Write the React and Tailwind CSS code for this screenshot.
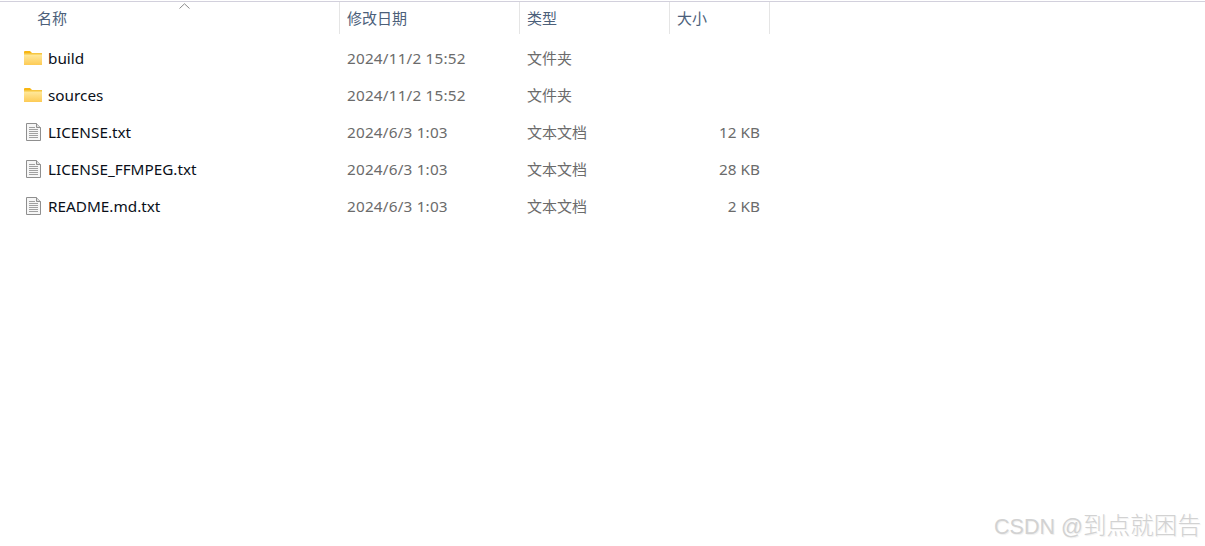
const FONT = { fontFamily: '"Noto Sans", "Noto Sans CJK SC", sans-serif' };

const rows = [
  { name: "build", icon: "folder", date: "2024/11/2 15:52", type: "文件夹", size: "" },
  { name: "sources", icon: "folder", date: "2024/11/2 15:52", type: "文件夹", size: "" },
  { name: "LICENSE.txt", icon: "file", date: "2024/6/3 1:03", type: "文本文档", size: "12 KB" },
  { name: "LICENSE_FFMPEG.txt", icon: "file", date: "2024/6/3 1:03", type: "文本文档", size: "28 KB" },
  { name: "README.md.txt", icon: "file", date: "2024/6/3 1:03", type: "文本文档", size: "2 KB" },
];

function FolderIcon() {
  return (
    <svg width="18" height="14" viewBox="0 0 18 14" className="shrink-0">
      <defs>
        <linearGradient id="fg" x1="0" y1="0" x2="0" y2="1">
          <stop offset="0" stopColor="#ffeaa0" />
          <stop offset="1" stopColor="#fdcb55" />
        </linearGradient>
      </defs>
      <path d="M0 1 Q0 0 1 0 H6 L8 2 V5 H0 Z" fill="#f8b612" />
      <rect x="0" y="2" width="18" height="12" fill="#f3c453" />
      <rect x="0" y="3" width="18" height="11" fill="url(#fg)" />
      <rect x="0" y="2.5" width="18" height="1" fill="#f8c535" />
    </svg>
  );
}

function FileIcon() {
  return (
    <svg width="15" height="18" viewBox="0 0 15 18" className="shrink-0">
      <path d="M.5.5 H10.5 L14.5 4.5 V17.5 H.5 Z" fill="#f6f6f6" stroke="#8f8f8f" />
      <path d="M10.5.5 V4.5 H14.5" fill="#dedede" stroke="#8f8f8f" />
      <path d="M3 4.5 H9 M3 6.5 H12 M3 8.5 H12 M3 10.5 H12 M3 12.5 H12 M3 14.5 H12" stroke="#a0a0a0" strokeWidth="1" />
    </svg>
  );
}

function Head({ width, label, sort }) {
  return (
    <div className={`relative flex h-[32px] items-center border-r border-[#e5e5e5] text-[15px] text-[#4c607a] ${width}`}>
      {sort && (
        <svg width="11" height="6" viewBox="0 0 11 6" className="absolute left-[179px] top-[1px]">
          <path d="M.5 5.5 L5.5 .8 L10.5 5.5" fill="none" stroke="#8a8a8a" strokeWidth="1" />
        </svg>
      )}
      <span className="-translate-y-[0.5px]">{label}</span>
    </div>
  );
}

export default function App() {
  return (
    <div className="relative h-[546px] w-[1205px] overflow-hidden bg-white" style={FONT}>
      <div className="pt-[1px]">
        <div className="h-[1px] bg-[#d2d0dc]" />
      </div>
      <div className="flex">
        <Head width="w-[340px] pl-[37px]" label="名称" sort />
        <Head width="w-[180px] pl-[7px]" label="修改日期" />
        <Head width="w-[150px] pl-[7px]" label="类型" />
        <Head width="w-[100px] pl-[7px]" label="大小" />
      </div>
      <div className="pt-[6px]">
        {rows.map((r) => (
          <div key={r.name} className="flex h-[37px] items-center text-[15.3px] text-[#6b6b6b]">
            <div className="flex w-[340px] items-center">
              <div className="flex w-[48px] justify-start pl-[24px]">
                <span className="flex w-[18px] -translate-y-[1px] justify-center">
                  {r.icon === "folder" ? <FolderIcon /> : <FileIcon />}
                </span>
              </div>
              <span className="text-[#0a0f18]">{r.name}</span>
            </div>
            <div className="w-[180px] pl-[7px] tracking-[0.2px]">{r.date}</div>
            <div className="w-[150px] pl-[7px] text-[15px]">{r.type}</div>
            <div className="w-[100px] pr-[10px] text-right">{r.size}</div>
          </div>
        ))}
      </div>
      <div
        className="absolute bottom-[4px] right-[4px] text-[21.6px] leading-[30px] text-[#d2d2d2]"
        style={{ textShadow: "1px 1px 1px #efefef", fontFamily: '"Liberation Sans", "Noto Sans CJK SC", sans-serif' }}
      >
        CSDN @<span className="text-[23.6px] font-light">到点就困告</span>
      </div>
    </div>
  );
}
